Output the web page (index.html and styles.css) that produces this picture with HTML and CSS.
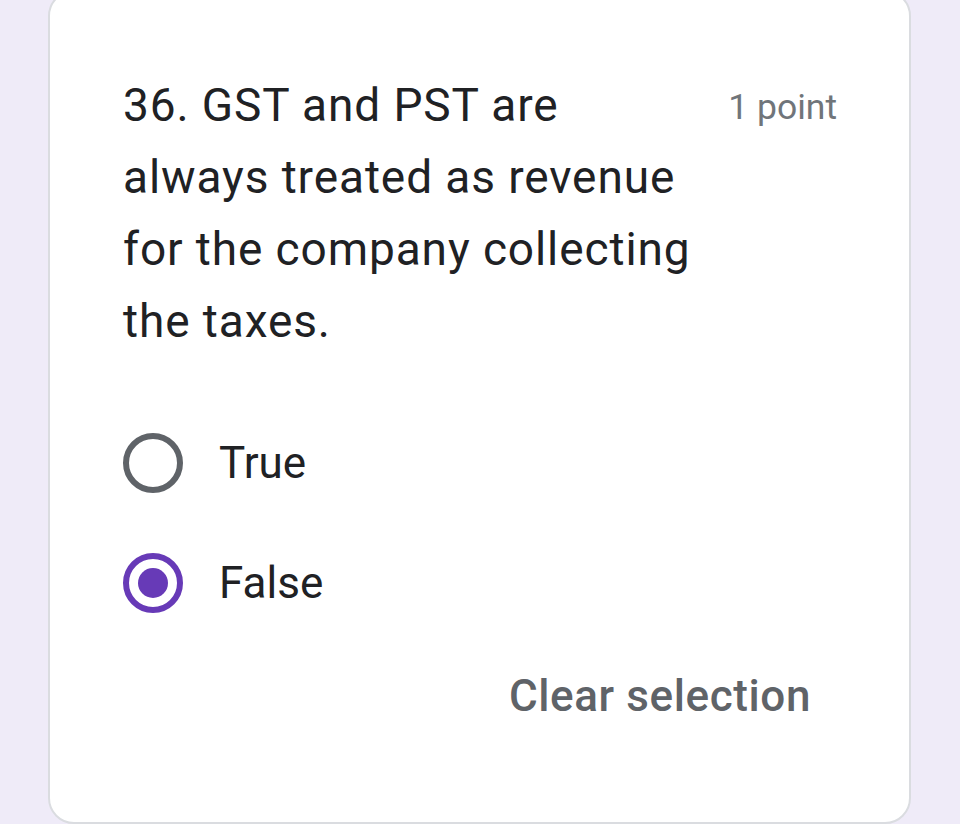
FILE: index.html
```html
<!DOCTYPE html>
<html lang="en">
<head>
<meta charset="utf-8">
<link rel="stylesheet" href="styles.css">
</head>
<body>
<div class="card">
  <div class="header">
    <div class="question">36. GST and PST are always treated as revenue for the company collecting the taxes.</div>
    <div class="points">1 point</div>
  </div>
  <div class="options">
    <label class="option">
      <span class="radio"></span>
      <span class="label">True</span>
    </label>
    <label class="option">
      <span class="radio checked"><span class="dot"></span></span>
      <span class="label">False</span>
    </label>
  </div>
  <div class="actions">
    <span class="clear">Clear selection</span>
  </div>
</div>
</body>
</html>
```
FILE: styles.css
```css
html, body {
  margin: 0;
  padding: 0;
  background: #efebf8;
  height: 824px;
  overflow: hidden;
}
body {
  font-family: Roboto, "Liberation Sans", sans-serif;
}
.card {
  box-sizing: border-box;
  margin: -10px 0 0 48px;
  width: 863px;
  height: 834px;
  background: #ffffff;
  border: 2.5px solid #dadce0;
  border-radius: 26px;
  padding: 77px 72px 0 73px;
}
.header {
  display: flex;
  justify-content: space-between;
  align-items: flex-start;
}
.question {
  width: 582px;
  font-size: 46px;
  line-height: 72px;
  color: #202124;
  letter-spacing: 0.9px;
}
.points {
  font-size: 35.5px;
  line-height: 72px;
  color: #70757a;
  margin-top: 2px;
}
.options {
  margin-top: 76px;
  display: flex;
  flex-direction: column;
  gap: 60px;
}
.option {
  display: flex;
  align-items: center;
  height: 60px;
  gap: 36px;
}
.radio {
  box-sizing: border-box;
  width: 60px;
  height: 60px;
  border-radius: 50%;
  border: 6px solid #5f6368;
  display: flex;
  align-items: center;
  justify-content: center;
  flex: none;
}
.radio.checked {
  border-color: #673ab7;
}
.dot {
  width: 30px;
  height: 30px;
  border-radius: 50%;
  background: #673ab7;
}
.label {
  font-size: 44px;
  color: #202124;
  line-height: 60px;
}
.actions {
  margin-top: 53px;
  display: flex;
  justify-content: flex-end;
  padding-right: 26px;
}
.clear {
  font-size: 44px;
  font-weight: 500;
  color: #5f6368;
  line-height: 60px;
  letter-spacing: 0.6px;
}
```
